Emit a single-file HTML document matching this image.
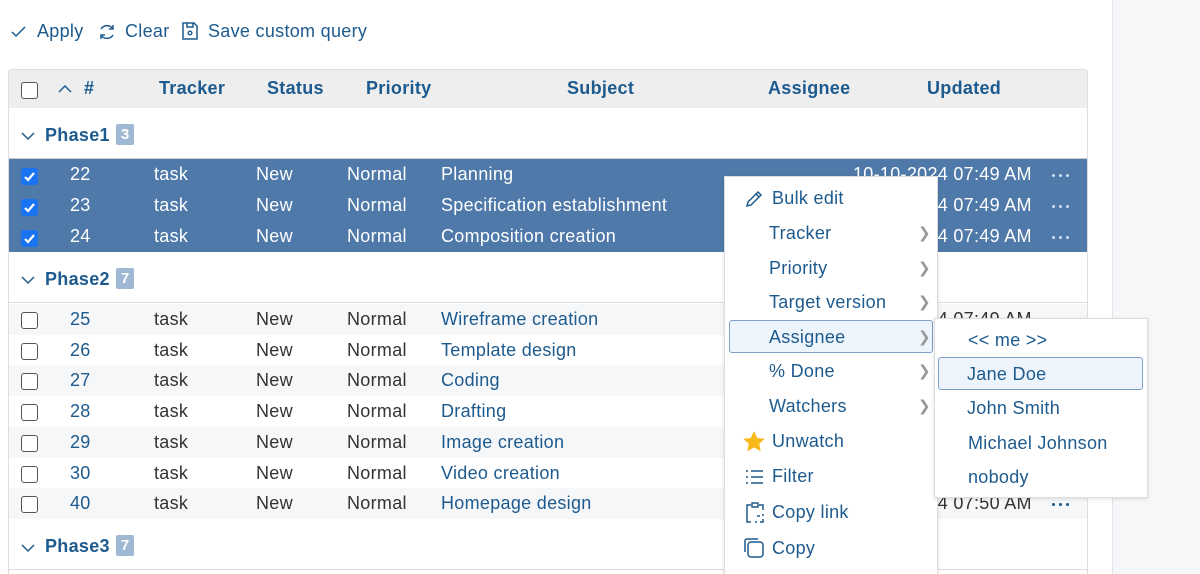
<!DOCTYPE html>
<html style="width:1200px;height:574px;overflow:hidden"><head><meta charset="utf-8"><style>
*{box-sizing:border-box;margin:0;padding:0}
body{width:1200px;height:574px;overflow:hidden;background:#fff;font-family:"Liberation Sans","DejaVu Sans",sans-serif;font-size:18px;letter-spacing:.3px;color:#333;position:relative}
.a{position:absolute;white-space:nowrap}
.blue{color:#1d5a8e}
.hd{font-weight:bold;color:#1d5a8e}
.cb{position:absolute;width:17px;height:17px;border:1.5px solid #555;border-radius:3px;background:#fff}
.cbc{position:absolute;width:17px;height:17px;border-radius:3px;background:#1a73f0}
.badge{position:absolute;width:18px;height:21px;background:#9fb8d3;color:#fff;font-weight:bold;font-size:15px;text-align:center;line-height:21px;border-radius:2px;letter-spacing:0}
.mi{position:absolute;color:#1d5a8e;white-space:nowrap}
.chev{position:absolute;left:918px;color:#999;font-size:15px}
.dot{position:absolute;width:3px;height:3px;border-radius:50%;background:#1d5a8e}
</style></head><body>
<div class="a" style="left:1112px;top:0;width:88px;height:574px;background:#f6f7f9;border-left:1px solid #e2e4e8"></div>

<svg class="a" style="left:11px;top:24px" width="16" height="16" viewBox="0 0 16 16"><path d="M1 8l4 4 9-9" stroke="#1d5a8e" stroke-width="1.5" fill="none"/></svg>
<div class="a blue" style="left:37px;top:21px">Apply</div>
<svg class="a" style="left:97px;top:22px" width="20" height="20" viewBox="0 0 20 20"><path d="M4 7a7 7 0 0 1 12 0M16 13a7 7 0 0 1-12 0M16 3v4h-4M4 17v-4h4" stroke="#1d5a8e" stroke-width="1.5" fill="none"/></svg>
<div class="a blue" style="left:125px;top:21px">Clear</div>
<svg class="a" style="left:180px;top:21px" width="20" height="20" viewBox="0 0 20 20"><path d="M3 2h11l3 3v13H3z M7 2v4h6V2" stroke="#1d5a8e" stroke-width="1.5" fill="none"/><circle cx="10" cy="12" r="1.8" stroke="#1d5a8e" stroke-width="1.4" fill="none"/></svg>
<div class="a blue" style="left:208px;top:21px">Save custom query</div>

<div class="a" style="left:8px;top:69px;width:1080px;height:520px;border:1px solid #ddd;border-radius:3px"></div>
<div class="a" style="left:9px;top:70px;width:1078px;height:38px;background:#eeeeee"></div>
<div class="cb" style="left:21px;top:82px"></div>
<svg class="a" style="left:58px;top:84px" width="14" height="10" viewBox="0 0 14 10"><path d="M1 8l6-6 6 6" stroke="#1d5a8e" stroke-width="1.5" fill="none"/></svg>
<div class="a hd" style="left:84px;top:78px">#</div>
<div class="a hd" style="left:159px;top:78px">Tracker</div>
<div class="a hd" style="left:267px;top:78px">Status</div>
<div class="a hd" style="left:366px;top:78px">Priority</div>
<div class="a hd" style="left:567px;top:78px">Subject</div>
<div class="a hd" style="left:768px;top:78px">Assignee</div>
<div class="a hd" style="left:927px;top:78px">Updated</div>

<svg class="a" style="left:21px;top:131px" width="14" height="10" viewBox="0 0 14 10"><path d="M1 2l6 6 6-6" stroke="#1d5a8e" stroke-width="1.5" fill="none"/></svg>
<div class="a hd" style="left:45px;top:125px">Phase1</div>
<div class="badge" style="left:116px;top:124px">3</div>
<div class="a" style="left:9px;top:158px;width:1078px;height:94px;background:#4e79a9;border-top:1px solid #ccc"></div>

<div id="sel"></div>

<svg class="a" style="left:21px;top:275px" width="14" height="10" viewBox="0 0 14 10"><path d="M1 2l6 6 6-6" stroke="#1d5a8e" stroke-width="1.5" fill="none"/></svg>
<div class="a hd" style="left:45px;top:269px">Phase2</div>
<div class="badge" style="left:116px;top:268px">7</div>
<div class="a" style="left:9px;top:302px;width:1078px;height:1px;background:#ddd"></div>

<svg class="a" style="left:21px;top:543px" width="14" height="10" viewBox="0 0 14 10"><path d="M1 2l6 6 6-6" stroke="#1d5a8e" stroke-width="1.5" fill="none"/></svg>
<div class="a hd" style="left:45px;top:536px">Phase3</div>
<div class="badge" style="left:116px;top:535px">7</div>
<div class="a" style="left:9px;top:569px;width:1078px;height:1px;background:#ddd"></div>

<script>
function dots(c,col){var o='';for(var k=0;k<3;k++)o+='<div class="dot" style="left:'+(1052+k*7)+'px;top:'+(c-1)+'px;background:'+col+'"></div>';return o;}
var s='';
var sel=[[22,'Planning'],[23,'Specification establishment'],[24,'Composition creation']];
sel.forEach(function(r,i){var c=175+i*31;
s+='<div class="cbc" style="left:21px;top:'+(c-7)+'px"><svg width="17" height="17" viewBox="0 0 17 17"><path d="M4 9l3 3 6-7" stroke="#fff" stroke-width="2.2" fill="none"/></svg></div>';
var t=c-11,st='color:#fff;top:'+t+'px';
s+='<div class="a" style="left:70px;'+st+'">'+r[0]+'</div><div class="a" style="left:154px;'+st+'">task</div><div class="a" style="left:256px;'+st+'">New</div><div class="a" style="left:347px;'+st+'">Normal</div><div class="a" style="left:441px;'+st+'">'+r[1]+'</div><div class="a" style="left:853px;'+st+'">10-10-2024 07:49 AM</div>'+dots(c,'#cfe0f3');});
var rows=[[25,'Wireframe creation'],[26,'Template design'],[27,'Coding'],[28,'Drafting'],[29,'Image creation'],[30,'Video creation'],[40,'Homepage design']];
rows.forEach(function(r,i){var top=304+i*30.7,c=top+16;
if(i%2==0)s+='<div class="a" style="left:9px;top:'+top+'px;width:1078px;height:31px;background:#f6f7f9"></div>';
s+='<div class="cb" style="left:21px;top:'+(c-8)+'px"></div>';
var t=c-11,st='top:'+t+'px';
s+='<div class="a blue" style="left:70px;'+st+'">'+r[0]+'</div><div class="a" style="left:154px;'+st+'">task</div><div class="a" style="left:256px;'+st+'">New</div><div class="a" style="left:347px;'+st+'">Normal</div><div class="a blue" style="left:441px;'+st+'">'+r[1]+'</div><div class="a" style="left:853px;'+st+'">10-10-2024 07:'+(r[0]==40?'50':'49')+' AM</div>'+dots(c,'#1d5a8e');});
document.getElementById('sel').outerHTML=s;
</script>

<div class="a" style="left:724px;top:176px;width:214px;height:410px;background:#fff;border:1px solid #ddd;box-shadow:0 1px 4px rgba(0,0,0,.12)"></div>
<svg class="a" style="left:744px;top:189px" width="20" height="20" viewBox="0 0 20 20"><path d="M3 17l1-4L14 3l3 3L7 16z M12 5l3 3" stroke="#1d5a8e" stroke-width="1.5" fill="none"/></svg>
<div class="mi" style="left:772px;top:188px">Bulk edit</div>
<div class="mi" style="left:769px;top:223px">Tracker</div><div class="chev" style="top:224px">&#x276F;</div>
<div class="mi" style="left:769px;top:258px">Priority</div><div class="chev" style="top:259px">&#x276F;</div>
<div class="mi" style="left:769px;top:292px">Target version</div><div class="chev" style="top:293px">&#x276F;</div>
<div class="a" style="left:729px;top:320px;width:204px;height:33px;background:#edf4fc;border:1px solid #7e9fc6;border-radius:3px"></div>
<div class="mi" style="left:769px;top:327px">Assignee</div><div class="chev" style="top:328px">&#x276F;</div>
<div class="mi" style="left:769px;top:361px">% Done</div><div class="chev" style="top:362px">&#x276F;</div>
<div class="mi" style="left:769px;top:396px">Watchers</div><div class="chev" style="top:397px">&#x276F;</div>
<svg class="a" style="left:742px;top:430px" width="24" height="22" viewBox="0 0 24 22"><path d="M12 1l3.3 7 7.5.8-5.6 5 1.6 7.4L12 17.5 5.2 21.2l1.6-7.4-5.6-5 7.5-.8z" fill="#f9b91a"/></svg>
<div class="mi" style="left:772px;top:431px">Unwatch</div>
<svg class="a" style="left:745px;top:467px" width="20" height="20" viewBox="0 0 20 20"><path d="M6 4h12M6 10h12M6 16h12M1 4h2M1 10h2M1 16h2" stroke="#1d5a8e" stroke-width="1.4"/></svg>
<div class="mi" style="left:772px;top:466px">Filter</div>
<svg class="a" style="left:745px;top:502px" width="20" height="22" viewBox="0 0 20 22"><path d="M6 3H2v17h4M14 3h4v5M7 1h6v4H7z M18 12v2M18 17v3h-3M10 20h2M12 14h3" stroke="#1d5a8e" stroke-width="1.5" fill="none"/></svg>
<div class="mi" style="left:772px;top:502px">Copy link</div>
<svg class="a" style="left:743px;top:537px" width="22" height="22" viewBox="0 0 22 22"><rect x="5" y="5" width="15" height="15" rx="3" stroke="#1d5a8e" stroke-width="1.5" fill="none"/><path d="M2 15V4a2 2 0 0 1 2-2h11" stroke="#1d5a8e" stroke-width="1.5" fill="none"/></svg>
<div class="mi" style="left:772px;top:538px">Copy</div>

<div class="a" style="left:934px;top:318px;width:214px;height:180px;background:#fff;border:1px solid #ddd;box-shadow:0 1px 4px rgba(0,0,0,.12)"></div>
<div class="mi" style="left:968px;top:330px">&lt;&lt; me &gt;&gt;</div>
<div class="a" style="left:938px;top:357px;width:205px;height:33px;background:#edf4fc;border:1px solid #7e9fc6;border-radius:3px"></div>
<div class="mi" style="left:967px;top:364px">Jane Doe</div>
<div class="mi" style="left:967px;top:398px">John Smith</div>
<div class="mi" style="left:968px;top:433px">Michael Johnson</div>
<div class="mi" style="left:968px;top:467px">nobody</div>
</body></html>
